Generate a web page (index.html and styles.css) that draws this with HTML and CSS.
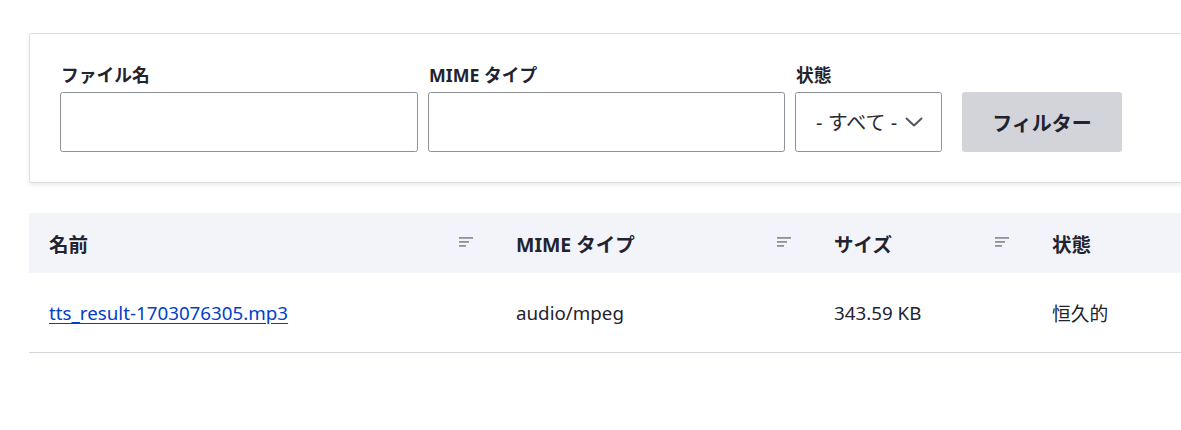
FILE: index.html
```html
<!DOCTYPE html>
<html lang="ja">
<head>
<meta charset="utf-8">
<title>ファイル</title>
<link rel="stylesheet" href="styles.css">
</head>
<body>
<main class="page">
  <form class="filter-card">
    <div class="form-item item-name">
      <label class="form-label" for="fn">ファイル名</label>
      <input class="form-input" id="fn" type="text">
    </div>
    <div class="form-item item-mime">
      <label class="form-label" for="mime">MIME タイプ</label>
      <input class="form-input" id="mime" type="text">
    </div>
    <div class="form-item item-status">
      <label class="form-label" for="st">状態</label>
      <div class="select-wrap">
        <select class="form-select" id="st">
          <option>- すべて -</option>
        </select>
        <svg class="chevron" width="18" height="10" viewBox="0 0 18 10" aria-hidden="true">
          <path d="M1.5 1.5 L9 8.5 L16.5 1.5" fill="none" stroke="#545560" stroke-width="2" stroke-linecap="round" stroke-linejoin="round"/>
        </svg>
      </div>
    </div>
    <div class="form-actions">
      <button class="btn" type="button">フィルター</button>
    </div>
  </form>

  <table class="files">
    <thead>
      <tr>
        <th class="col-name"><div class="th-inner"><span>名前</span><svg class="sort" width="14" height="12" viewBox="0 0 14 12"><rect x="0" y="1" width="14" height="1.8" fill="#8e929c"/><rect x="0" y="5" width="10" height="1.8" fill="#8e929c"/><rect x="0" y="9" width="7" height="1.8" fill="#8e929c"/></svg></div></th>
        <th class="col-mime"><div class="th-inner"><span>MIME タイプ</span><svg class="sort" width="14" height="12" viewBox="0 0 14 12"><rect x="0" y="1" width="14" height="1.8" fill="#8e929c"/><rect x="0" y="5" width="10" height="1.8" fill="#8e929c"/><rect x="0" y="9" width="7" height="1.8" fill="#8e929c"/></svg></div></th>
        <th class="col-size"><div class="th-inner"><span>サイズ</span><svg class="sort" width="14" height="12" viewBox="0 0 14 12"><rect x="0" y="1" width="14" height="1.8" fill="#8e929c"/><rect x="0" y="5" width="10" height="1.8" fill="#8e929c"/><rect x="0" y="9" width="7" height="1.8" fill="#8e929c"/></svg></div></th>
        <th class="col-status"><div class="th-inner"><span>状態</span></div></th>
      </tr>
    </thead>
    <tbody>
      <tr>
        <td><a class="file-link" href="#">tts_result-1703076305.mp3</a></td>
        <td>audio/mpeg</td>
        <td>343.59 KB</td>
        <td>恒久的</td>
      </tr>
    </tbody>
  </table>
</main>
</body>
</html>
```

FILE: styles.css
```css
html, body {
  margin: 0;
  padding: 0;
  background: #ffffff;
  overflow: hidden;
}

body {
  font-family: "Noto Sans", "Noto Sans CJK JP", sans-serif;
  color: #222330;
}

.page {
  width: 1260px;
  padding: 33px 0 0 29px;
}

.filter-card {
  display: flex;
  align-items: flex-end;
  padding: 30px 30px 30px 30px;
  border: 1px solid #dedfe4;
  border-radius: 2px;
  box-shadow: 0 2px 4px rgba(0, 0, 0, 0.08);
  background: #fff;
  margin: 0;
}

.form-item {
  display: flex;
  flex-direction: column;
  margin-right: 10px;
}

.form-label {
  display: block;
  font-size: 17.78px;
  font-weight: 700;
  line-height: 22px;
  margin-bottom: 6px;
  padding-left: 1px;
}

.form-input {
  box-sizing: border-box;
  height: 60px;
  border: 1px solid #8e929c;
  border-radius: 2.5px;
  background: #fff;
  font: inherit;
  margin: 0;
}

.item-name .form-input { width: 358px; }
.item-mime .form-input { width: 357px; }

.select-wrap {
  position: relative;
  width: 147px;
  height: 60px;
}

.form-select {
  appearance: none;
  -webkit-appearance: none;
  box-sizing: border-box;
  width: 100%;
  height: 60px;
  border: 1px solid #8e929c;
  border-radius: 2.5px;
  background: #fff;
  padding: 0 0 0 20px;
  margin: 0;
  font-family: "Noto Sans", "Noto Sans CJK JP", sans-serif;
  font-size: 20px;
  color: #2a2b36;
}

.chevron {
  position: absolute;
  right: 19px;
  top: 25px;
}

.form-actions {
  margin-left: 10px;
}

.btn {
  display: block;
  width: 160px;
  height: 60px;
  border: 0;
  border-radius: 3px;
  background: #d3d4d9;
  color: #222330;
  font-family: "Noto Sans", "Noto Sans CJK JP", sans-serif;
  font-size: 20px;
  font-weight: 700;
  padding: 0;
  margin: 0;
}

.files {
  margin-top: 30px;
  width: 1231px;
  border-collapse: collapse;
  table-layout: fixed;
}

.files th {
  height: 60px;
  background: #f3f4f9;
  text-align: left;
  font-size: 19.5px;
  font-weight: 700;
  padding: 0 23px 0 20px;
  box-sizing: border-box;
  vertical-align: middle;
}

.col-name { width: 467px; }
.col-mime { width: 318px; }
.col-size { width: 218px; }

.th-inner {
  display: flex;
  align-items: center;
  justify-content: space-between;
}

.sort {
  display: block;
  margin-top: -2px;
}

.files td {
  height: 79px;
  padding: 0 20px;
  font-size: 18.75px;
  border-bottom: 1px solid #d3d4d9;
  vertical-align: middle;
}

.file-link {
  color: #003ecc;
  text-decoration: underline;
  text-underline-offset: 3px;
}
```
